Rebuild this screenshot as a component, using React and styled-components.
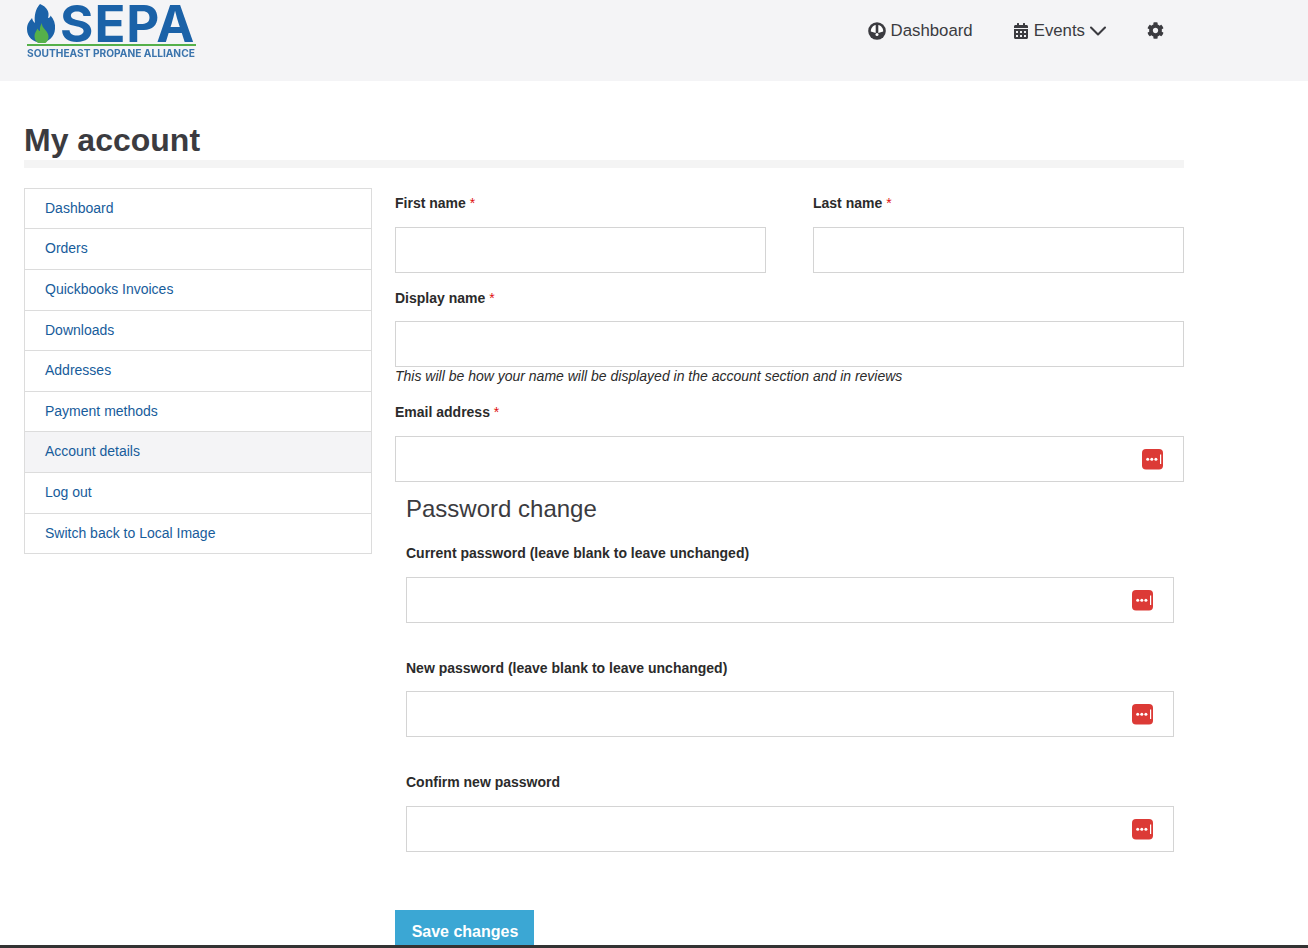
import React from 'react';
import styled, { createGlobalStyle } from 'styled-components';
import { FaCalendarAlt, FaCog } from 'react-icons/fa';
import { ChevronDown } from 'lucide-react';

const GlobalStyle = createGlobalStyle`
    html, body { margin: 0; padding: 0; background: #ffffff; }
    body { font-family: "Liberation Sans", Arial, sans-serif; color: #2b2b2b; }
    * { box-sizing: border-box; }
`

const Header = styled.header`
    height: 81px;
    background: #f4f4f6;
    display: flex; justify-content: space-between; align-items: flex-start;
    padding-left: 27px;
`
const Logo = styled.a`
    display: block;
    width: 169px;
    padding-top: 4px;
    filter: blur(0.3px);
`
const LogoTop = styled.div`
    display: flex; align-items: flex-end;
    height: 39px;
`
const LogoName = styled.span`
    font-family: Inter, "Liberation Sans", sans-serif;
    font-size: 51px; font-weight: 700; line-height: 38px;
    color: #1b62a8;
    letter-spacing: 1px;
    margin-left: 4px;
    white-space: nowrap;
`
const LogoLine = styled.div`
    height: 2px;
    margin-top: 1px;
    background: #55b04a;
`
const LogoTag = styled.div`
    font-family: Inter, "Liberation Sans", sans-serif;
    font-size: 10.2px; font-weight: 700; line-height: 11px;
    color: #3b74ad;
    white-space: nowrap;
    margin-top: 2px;
`
const Nav = styled.nav`
    display: flex; align-items: center;
    height: 61px;
    margin-right: 144px;
`
const NavItem = styled.a`
    display: flex; align-items: center; gap: 5px;
    font-size: 16.8px;
    color: #3b3b40;
    margin-left: ${p => p.$left ?? 40}px;
    svg { flex: none; color: #3b3b40; }
`
const Chevron = styled(ChevronDown)`
    margin-left: -6px;
`
const Page = styled.main`
    width: 1184px;
    padding-left: 24px;
`
const Title = styled.h1`
    font-size: 32px; font-weight: bold; line-height: 37px;
    color: #3b3b40;
    margin: 41px 0 0;
    padding-bottom: 1px;
    border-bottom: 8px solid #f4f4f4;
`
const Columns = styled.div`
    display: flex; align-items: flex-start;
    gap: 23px;
    margin-top: 20px;
`
const Side = styled.ul`
    width: 348px;
    flex: none;
    list-style: none;
    margin: 0; padding: 0;
    border: 1px solid #dcdcdc;
`
const SideItem = styled.li`
    height: ${p => p.$first ? 39.4 : 40.6}px;
    display: flex; align-items: center;
    padding: 0 0 1.6px 20px;
    font-size: 14px;
    color: #175c9b;
    background: ${p => p.$active ? '#f4f4f6' : '#ffffff'};
    border-top: ${p => p.$first ? '0' : '1px solid #dcdcdc'};
`
const Content = styled.form`
    flex: 1;
    min-width: 0;
    padding-top: 5px;
`
const NameRow = styled.div`
    display: grid; grid-template-columns: 371px 371px;
    justify-content: space-between;
`
const Field = styled.div`
    margin-top: ${p => p.$before ?? 0}px;
    margin-bottom: ${p => p.$after ?? 15}px;
`
const Label = styled.label`
    display: block;
    font-size: 14px; font-weight: bold; line-height: 20px;
    color: #2b2b2b;
    margin-bottom: ${p => p.$gap ?? 14}px;
`
const Required = styled.span`
    color: #e01010;
    font-weight: normal;
`
const InputWrap = styled.div`
    position: relative;
`
const Input = styled.input`
    display: block;
    width: 100%; height: 46px;
    border: 1px solid #d4d4d4;
    background: #ffffff;
    outline: none;
`
const KeyBadge = styled.svg`
    position: absolute;
    right: 21px; top: 13px;
    width: 21px; height: 21px;
`
const Hint = styled.div`
    font-size: 14px; font-style: italic; line-height: 18px;
    color: #2b2b2b;
`
const Password = styled.fieldset`
    border: 0;
    margin: 0; padding: 0 10px 0 11px;
`
const Legend = styled.h2`
    font-size: 24px; font-weight: normal; line-height: 28px;
    color: #3b3b40;
    margin: 13px 0 20px;
`
const SaveButton = styled.button`
    display: block;
    width: 139px; height: 35px;
    margin-top: 58px;
    border: 0;
    background: #3ba7d4;
    color: #ffffff;
    font-family: inherit;
    font-size: 16px; font-weight: bold;
    padding: 8px 0 0 1px;
`
const Footer = styled.footer`
    height: 3px;
    background: #333333;
`

function PasswordIcon() {
    return (
        <KeyBadge viewBox="0 0 21 21">
            <rect width="21" height="20.500" rx="4" fill="#dc3a36" />
            <circle cx="5.700" cy="10.300" r="1.500" fill="#fff" />
            <circle cx="9.800" cy="10.300" r="1.500" fill="#fff" />
            <circle cx="13.900" cy="10.300" r="1.500" fill="#fff" />
            <rect x="18" y="5.500" width="1.200" height="9.500" fill="#fff" />
        </KeyBadge>
    )
}

function DialIcon() {
    return (
        <svg width="18" height="18" viewBox="0 0 18 18">
            <circle cx="9" cy="9" r="8.800" fill="#3b3b40" />
            <path d="M7.700 3 L7.700 11 L2.800 9.500 C2.800 6 5 3.500 7.700 3 Z" fill="#fff" />
            <path d="M10.300 3 L10.300 11 L15.200 9.500 C15.200 6 13 3.500 10.300 3 Z" fill="#fff" />
            <circle cx="9" cy="12.500" r="1.500" fill="#fff" />
        </svg>
    )
}

function FlameIcon() {
    return (
        <svg width="29" height="39" viewBox="0 0 29 39">
            <path d="M13 0 C20 3 23 8 21 14 C22.500 14 23.500 13 23.500 11.500 C27 15 28.500 20 28 25 C27.500 33 21 38.500 14 38.500 C6 38.500 0 33 0 25 C0 20 2.500 17 5 14 C5.500 16 6.500 18 8 19 C7 12 8.500 5 13 0 Z" fill="#1b62a8" />
            <path d="M15 19 C14 24 22 27 21.500 33 C21.500 36 20 38 18.500 39 L11 39 C8.500 37 7.500 35 7.500 32 C7.500 28.500 9.500 27 10.500 24.500 C11 26 12 27 13 27 C12.500 24 13.500 21 15 19 Z" fill="#55b04a" />
        </svg>
    )
}

function FormField({ label, required, after, before, gap, icon }) {
    return (
        <Field $after={after} $before={before}>
            <Label $gap={gap}>{label}{required && <> <Required>*</Required></>}</Label>
            <InputWrap>
                <Input />
                {icon && <PasswordIcon />}
            </InputWrap>
        </Field>
    )
}

const sideLinks = ['Dashboard', 'Orders', 'Quickbooks Invoices', 'Downloads', 'Addresses', 'Payment methods', 'Account details', 'Log out', 'Switch back to Local Image'];

function App() {
    return (
        <>
            <GlobalStyle />
            <Header>
                <Logo>
                    <LogoTop>
                        <FlameIcon />
                        <LogoName>SEPA</LogoName>
                    </LogoTop>
                    <LogoLine />
                    <LogoTag>SOUTHEAST PROPANE ALLIANCE</LogoTag>
                </Logo>
                <Nav>
                    <NavItem><DialIcon />Dashboard</NavItem>
                    <NavItem><FaCalendarAlt size={16} />Events<Chevron size={28} strokeWidth={1.800} /></NavItem>
                    <NavItem $left={35}><FaCog size={17} /></NavItem>
                </Nav>
            </Header>
            <Page>
                <Title>My account</Title>
                <Columns>
                    <Side>
                        {sideLinks.map((link, i) => (
                            <SideItem key={link} $first={i === 0} $active={link === 'Account details'}>{link}</SideItem>
                        ))}
                    </Side>
                    <Content>
                        <NameRow>
                            <FormField label="First name" required />
                            <FormField label="Last name" required />
                        </NameRow>
                        <FormField label="Display name" required gap={13} after={0} />
                        <Hint>This will be how your name will be displayed in the account section and in reviews</Hint>
                        <FormField label="Email address" required before={17} after={0} icon />
                        <Password>
                            <Legend>Password change</Legend>
                            <FormField label="Current password (leave blank to leave unchanged)" after={35} icon />
                            <FormField label="New password (leave blank to leave unchanged)" gap={13} after={35} icon />
                            <FormField label="Confirm new password" after={0} icon />
                        </Password>
                        <SaveButton type="button">Save changes</SaveButton>
                    </Content>
                </Columns>
            </Page>
            <Footer />
        </>
    )
}

export default App;
